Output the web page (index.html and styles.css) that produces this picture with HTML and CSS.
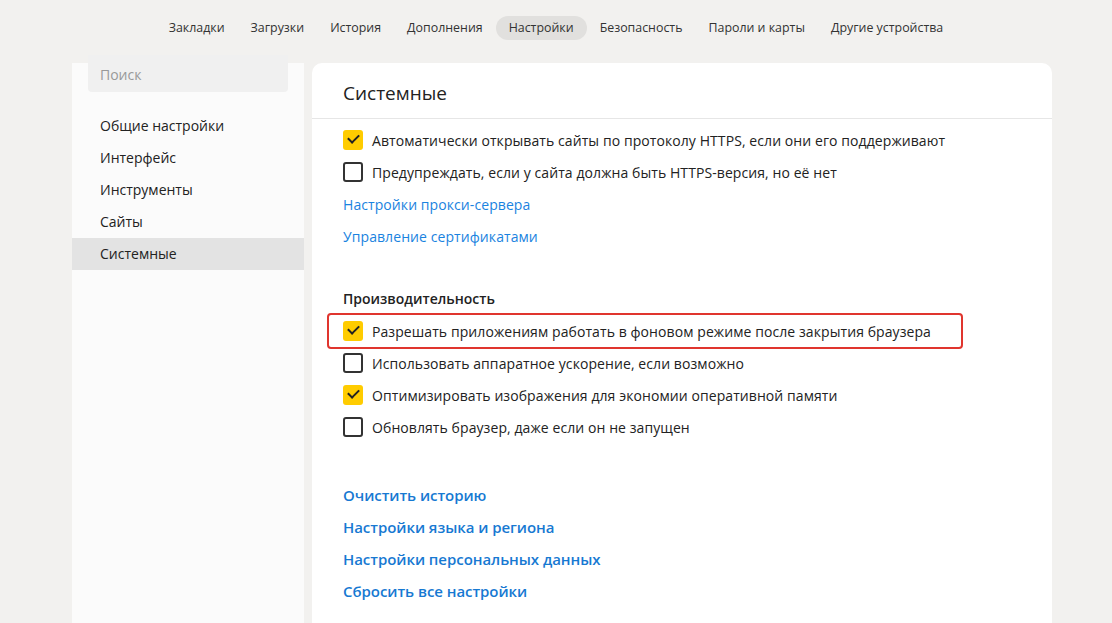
FILE: index.html
```html
<!DOCTYPE html>
<html>

<head>
    <title>Настройки</title>
    <meta charset="utf-8">
    <link rel="stylesheet" href="styles.css">
</head>

<body>
    <div class="top-nav">
        <a class="nav-item">Закладки</a>
        <a class="nav-item">Загрузки</a>
        <a class="nav-item">История</a>
        <a class="nav-item">Дополнения</a>
        <a class="nav-item active">Настройки</a>
        <a class="nav-item">Безопасность</a>
        <a class="nav-item">Пароли и карты</a>
        <a class="nav-item">Другие устройства</a>
    </div>
    <div class="page">
        <div class="sidebar">
            <div class="search">Поиск</div>
            <div class="side-list">
                <div class="side-item">Общие настройки</div>
                <div class="side-item">Интерфейс</div>
                <div class="side-item">Инструменты</div>
                <div class="side-item">Сайты</div>
                <div class="side-item active">Системные</div>
            </div>
        </div>
        <div class="card">
            <div class="card-title">Системные</div>
            <div class="card-body">
                <div class="row"><span class="check on"></span>Автоматически открывать сайты по протоколу HTTPS, если они его поддерживают</div>
                <div class="row"><span class="check"></span>Предупреждать, если у сайта должна быть HTTPS-версия, но её нет</div>
                <div class="row"><a class="link">Настройки прокси-сервера</a></div>
                <div class="row"><a class="link">Управление сертификатами</a></div>

                <div class="section-title">Производительность</div>
                <div class="row marked"><span class="check on"></span>Разрешать приложениям работать в фоновом режиме после закрытия браузера</div>
                <div class="row"><span class="check"></span>Использовать аппаратное ускорение, если возможно</div>
                <div class="row"><span class="check on"></span>Оптимизировать изображения для экономии оперативной памяти</div>
                <div class="row"><span class="check"></span>Обновлять браузер, даже если он не запущен</div>

                <div class="actions">
                    <div class="row"><a class="link strong">Очистить историю</a></div>
                    <div class="row"><a class="link strong">Настройки языка и региона</a></div>
                    <div class="row"><a class="link strong">Настройки персональных данных</a></div>
                    <div class="row"><a class="link strong">Сбросить все настройки</a></div>
                </div>
            </div>
        </div>
    </div>
</body>

</html>
```

FILE: styles.css
```css
body {
    margin: 0;
    background-color: #f2f1ef;
    font-family: "Open Sans", "Noto Sans", sans-serif;
    color: #222;
    overflow: hidden;
}

.top-nav {
    display: flex;
    justify-content: center;
    padding-top: 16px;
    height: 48px;
    box-sizing: border-box;
}

.nav-item {
    height: 24px;
    line-height: 24px;
    padding: 0 13px;
    font-size: 12.4px;
    color: #333;
    border-radius: 12px;
}

.nav-item.active {
    background-color: #e1e0de;
}

.page {
    display: flex;
    margin-left: 72px;
    gap: 8px;
    height: 600px;
}

.sidebar {
    width: 232px;
    background-color: #fbfbfb;
    margin-top: 15px;
}

.search {
    margin: -8px 16px 0;
    height: 37px;
    line-height: 30px;
    padding-left: 12px;
    padding-top: 5px;
    box-sizing: border-box;
    background-color: #f0f0f0;
    border-radius: 0 0 4px 4px;
    color: #999;
    font-size: 14px;
}

.side-list {
    margin-top: 18px;
}

.side-item {
    height: 32px;
    line-height: 32px;
    padding-left: 28px;
    font-size: 14px;
}

.side-item.active {
    background-color: #e3e3e3;
}

.card {
    width: 740px;
    margin-top: 15px;
    background-color: #fff;
    border-radius: 10px 10px 0 0;
}

.card-title {
    height: 55px;
    line-height: 60px;
    padding-left: 31px;
    font-size: 19px;
    border-bottom: 1px solid #e6e6e6;
}

.card-body {
    padding: 5px 31px 0;
}

.row {
    position: relative;
    display: flex;
    align-items: center;
    height: 32px;
    font-size: 14px;
    letter-spacing: 0.08px;
}

.check {
    width: 20px;
    height: 20px;
    box-sizing: border-box;
    margin-right: 9px;
    border: 2px solid #333;
    border-radius: 3px;
    position: relative;
}

.check.on {
    border: none;
    background-color: #ffcc00;
}

.check.on::after {
    content: "";
    position: absolute;
    left: 5px;
    top: 4px;
    width: 9px;
    height: 5px;
    border-left: 2px solid #222;
    border-bottom: 2px solid #222;
    transform: rotate(-45deg);
}

.link {
    color: #1a83e0;
    font-size: 14px;
}

.link.strong {
    color: #1779d2;
    font-size: 15px;
    font-weight: 600;
    letter-spacing: -0.05px;
}

.section-title {
    margin-top: 31px;
    height: 32px;
    line-height: 32px;
    font-size: 14px;
    font-weight: 600;
}

/* красная рамка вокруг выделенной опции */
.marked::after {
    content: "";
    position: absolute;
    left: -16px;
    top: -2px;
    width: 636px;
    height: 36px;
    box-sizing: border-box;
    border: 2px solid #e0352e;
    border-radius: 4px;
}

.actions {
    margin-top: 36px;
}
```
